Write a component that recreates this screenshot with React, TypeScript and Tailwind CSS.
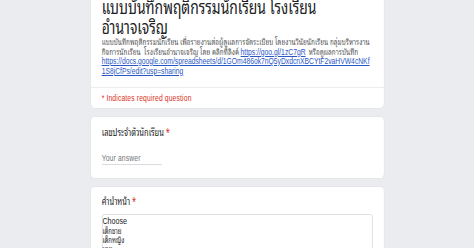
import React from "react";

export default function App() {
  return (
    <div className="w-[474px] h-[248px] overflow-hidden bg-[#ebecef]">
      <div className="w-[632px] origin-top-left scale-x-75 flex justify-center items-start">
        <div className="w-[393px] mt-[-19px] flex flex-col gap-[7px]">
          <div className="shrink-0 bg-white rounded-[6px] border border-[#e2e3e6]">
            <div className="px-[15px] pt-[14px] pb-[10px]">
              <h1 className="text-[18.5px] leading-[20px] text-[#202124] font-normal font-['Noto_Sans_Thai_Looped','Noto_Sans_Thai',sans-serif]">
                แบบบันทึกพฤติกรรมนักเรียน โรงเรียน
                <br />
                อำนาจเจริญ
              </h1>
              <p className="mt-[3px] text-[8.5px] leading-[9.5px] text-[#3c4043] [overflow-wrap:anywhere] font-['Noto_Serif_Thai','Liberation_Serif',serif]">
                แบบบันทึกพฤติกรรมนักเรียน เพื่อรายงานต่อผู้ดูแลการจัดระเบียบ โดยงานวินัยนักเรียน กลุ่มบริหารงานกิจการนักเรียน&nbsp; โรงเรียนอำนาจเจริญ โดย คลิกที่ลิงค์{" "}
                <a className="underline text-[#2a56c6] text-[9px] leading-[6px] font-['Liberation_Sans',sans-serif]">
                  https://goo.gl/1zC7gR
                </a>{" "}
                &nbsp;หรือดูผลการบันทึก{" "}
                <a className="underline text-[#2a56c6] text-[9px] leading-[6px] font-['Liberation_Sans',sans-serif]">
                  https://docs.google.com/spreadsheets/d/1GOm486ok7nQ5yDxdcnXBCYtF2vaHVW4cNKf1S8jCfPs/edit?usp=sharing
                </a>
              </p>
            </div>
            <div className="border-t border-[#ececee] px-[15px] pt-[5px] pb-[5px] text-[9px] leading-[10px] tracking-[0.2px] text-[#d93025] font-['Liberation_Sans',sans-serif]">
              * Indicates required question
            </div>
          </div>

          <div className="shrink-0 bg-white rounded-[6px] border border-[#e2e3e6] h-[63px] px-[15px] pt-[9px]">
            <div className="text-[10px] leading-[12px] text-[#202124] font-['Noto_Sans_Thai_Looped','Noto_Sans_Thai',sans-serif]">
              เลขประจำตัวนักเรียน <span className="text-[#d93025]">*</span>
            </div>
            <div className="mt-[15px] w-[80px] border-b border-[#dadce0] pb-[1px] text-[9px] leading-[10px] tracking-[0.2px] text-[#70757a] font-['Liberation_Sans',sans-serif]">
              Your answer
            </div>
          </div>

          <div className="shrink-0 bg-white rounded-t-[6px] border border-[#e2e3e6] h-[80px] px-[15px] pt-[8px]">
            <div className="text-[10px] leading-[12px] text-[#202124] font-['Noto_Sans_Thai_Looped','Noto_Sans_Thai',sans-serif]">
              คำนำหน้า <span className="text-[#d93025]">*</span>
            </div>
            <div className="mt-[7px] border border-[#dcdcde] rounded-[3px] h-[60px] pt-[1px] text-[#202124]">
              <div className="text-[9.5px] leading-[10px] font-['Liberation_Sans',sans-serif]">Choose</div>
              <div className="text-[8px] leading-[9px] font-['Noto_Sans_Thai_Looped','Noto_Sans_Thai',sans-serif]">เด็กชาย</div>
              <div className="text-[8px] leading-[9px] font-['Noto_Sans_Thai_Looped','Noto_Sans_Thai',sans-serif]">เด็กหญิง</div>
              <div className="text-[8px] leading-[9px] font-['Noto_Sans_Thai_Looped','Noto_Sans_Thai',sans-serif]">นาย</div>
            </div>
          </div>
        </div>
      </div>
    </div>
  );
}
